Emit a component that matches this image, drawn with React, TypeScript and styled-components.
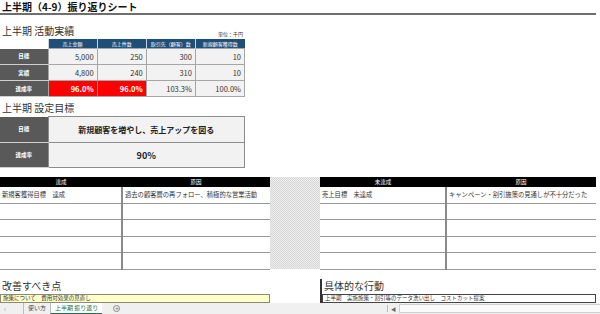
import React from "react";
import styled, { createGlobalStyle } from "styled-components";

const GlobalStyle = createGlobalStyle`
  html, body {
    margin: 0;
    padding: 0;
    background: #fff;
  }
  body {
    font-family: "Noto Sans CJK JP", "Noto Sans", sans-serif;
    color: #222;
    overflow: hidden;
  }
`;

const Page = styled.div`
  width: 600px;
  height: 314px;
  display: flex;
  flex-direction: column;
  overflow: hidden;
`;

const TitleBar = styled.h1`
  margin: 0;
  width: 594px;
  height: 12px;
  padding: 1px 0 0 2px;
  border-bottom: 2px solid #6e6e6e;
  font-size: 10px;
  font-weight: 700;
  line-height: 11px;
  color: #111;
`;

const SectionHead = styled.div<{ $top: number }>`
  width: 245px;
  margin-top: ${(p) => p.$top}px;
  height: 14px;
  display: flex;
  align-items: flex-end;
  justify-content: space-between;
`;

const SectionTitle = styled.h2`
  margin: 0;
  padding-left: 2px;
  font-size: 10px;
  font-weight: 400;
  line-height: 14px;
  color: #333;
`;

const Unit = styled.span`
  font-size: 5px;
  line-height: 9px;
  margin-right: 2px;
  color: #333;
`;

const Sheet = styled.table<{ $width: number }>`
  border-collapse: collapse;
  table-layout: fixed;
  width: ${(p) => p.$width}px;
  margin-top: 1px;
  th,
  td {
    padding: 0;
    overflow: hidden;
    white-space: nowrap;
  }
`;

const Row = styled.tr<{ $h: number }>`
  height: ${(p) => p.$h}px;
`;

const HeadCell = styled.th`
  background: #1f4e79;
  color: #fff;
  font-size: 5px;
  font-weight: 400;
  line-height: 9px;
  text-align: center;
  border-left: 1px solid #c8d2e0;
`;

const BlankCell = styled.th`
  background: #fff;
`;

const LabelCell = styled.th`
  background: #595959;
  color: #fff;
  font-size: 5.5px;
  font-weight: 700;
  text-align: center;
  border-bottom: 1px solid #d0d0d0;
`;

const ValueCell = styled.td<{ $alert?: boolean }>`
  background: ${(p) => (p.$alert ? "#ff0000" : "#f2f2f2")};
  color: ${(p) => (p.$alert ? "#fff" : "#333")};
  font-weight: ${(p) => (p.$alert ? 700 : 400)};
  font-size: 7.5px;
  text-align: right;
  padding-right: 3px !important;
  border: 1px solid #a6a6a6;
`;

const GoalCell = styled.td<{ $size: number }>`
  background: #f2f2f2;
  color: #222;
  font-size: ${(p) => p.$size}px;
  font-weight: 700;
  text-align: center;
  border: 1px solid #8c8c8c;
`;

const ReviewRow = styled.div`
  display: flex;
  margin-top: 9px;
  width: 596px;
`;

const ReviewTable = styled.table<{ $width: number }>`
  border-collapse: collapse;
  table-layout: fixed;
  width: ${(p) => p.$width}px;
  th,
  td {
    padding: 0;
    white-space: nowrap;
    overflow: hidden;
  }
`;

const BlackHead = styled.th`
  background: #000;
  color: #fff;
  font-size: 5.5px;
  font-weight: 400;
  text-align: center;
  line-height: 10px;
  height: 10px;
`;

const NoteCell = styled.td<{ $divider?: boolean }>`
  height: 15.5px;
  font-size: 6.3px;
  color: #333;
  padding-left: 2px !important;
  border-bottom: 1px solid #9a9a9a;
  border-right: ${(p) => (p.$divider ? "2px solid #8a8a8a" : "none")};
`;

const Hatch = styled.div`
  width: 50px;
  height: 92px;
  background-color: #e4e4e4;
  background-image: repeating-conic-gradient(#d8d8d8 0 25%, #ececec 0 50%);
  background-size: 2px 2px;
`;

const BottomRow = styled.div`
  display: flex;
  gap: 50px;
  margin-top: 9px;
  width: 596px;
`;

const NoteBlock = styled.div<{ $width: number; $rule?: boolean }>`
  width: ${(p) => p.$width}px;
  border-left: ${(p) => (p.$rule ? "2px solid #333" : "none")};
  box-sizing: border-box;
`;

const BlockTitle = styled.h3`
  margin: 0;
  padding-left: 2px;
  height: 15px;
  font-size: 10px;
  font-weight: 400;
  line-height: 14px;
  color: #333;
`;

const NoteBox = styled.div<{ $tint?: boolean }>`
  height: 7px;
  border: 1px solid ${(p) => (p.$tint ? "#8c8c6c" : "#444")};
  background: ${(p) => (p.$tint ? "#ffffcc" : "#fff")};
  font-size: 5.5px;
  line-height: 7px;
  padding-left: 2px;
  color: #333;
  white-space: nowrap;
  overflow: hidden;
`;

const TabBar = styled.div`
  margin-top: auto;
  height: 11px;
  background: #f0f0f0;
  display: flex;
  align-items: stretch;
  font-size: 6px;
  color: #444;
`;

const NavArrow = styled.span`
  width: 23px;
  padding-left: 4px;
  box-sizing: border-box;
  color: #999;
  font-size: 7px;
  line-height: 11px;
`;

const Tab = styled.span<{ $active?: boolean }>`
  padding: 0 4px;
  line-height: 10px;
  border-left: 1px solid #bdbdbd;
  background: ${(p) => (p.$active ? "#fff" : "transparent")};
  color: ${(p) => (p.$active ? "#217346" : "#444")};
  border-bottom: ${(p) => (p.$active ? "1px solid #217346" : "none")};
`;

const AddButton = styled.span`
  width: 7px;
  height: 7px;
  margin: 2px 0 0 11px;
  border: 1px solid #888;
  border-radius: 50%;
  box-sizing: border-box;
  color: #666;
  font-size: 6px;
  line-height: 5px;
  text-align: center;
`;

const ScrollArea = styled.div`
  margin-left: auto;
  width: 213px;
  display: flex;
  align-items: center;
  gap: 3px;
`;

const ScrollDivider = styled.span`
  width: 1px;
  height: 7px;
  background: #bbb;
`;

const ScrollArrow = styled.span`
  font-size: 5px;
  color: #666;
`;

const ScrollTrack = styled.span`
  flex: 1;
  height: 7px;
  border: 1px solid #d0d0d0;
  border-right: none;
  background: #fafafa;
`;

const headers = ["売上金額", "売上件数", "取引先（顧客）数", "新規顧客獲得数"];

const results = [
  { label: "目標", values: ["5,000", "250", "300", "10"], alert: [] as number[] },
  { label: "実績", values: ["4,800", "240", "310", "10"], alert: [] as number[] },
  { label: "達成率", values: ["96.0%", "96.0%", "103.3%", "100.0%"], alert: [0, 1] },
];

const achieved = [["新規客獲得目標　達成", "過去の顧客層の再フォロー、積極的な営業活動"], ["", ""], ["", ""], ["", ""], ["", ""]];
const missed = [["売上目標　未達成", "キャンペーン・割引施策の見通しが不十分だった"], ["", ""], ["", ""], ["", ""], ["", ""]];

function Review({ title, rows, width, split }: { title: string; rows: string[][]; width: number; split: number }) {
  return (
    <ReviewTable $width={width}>
      <colgroup>
        <col style={{ width: split }} />
        <col />
      </colgroup>
      <thead>
        <tr>
          <BlackHead>{title}</BlackHead>
          <BlackHead>原因</BlackHead>
        </tr>
      </thead>
      <tbody>
        {rows.map((r, i) => (
          <tr key={i}>
            <NoteCell $divider>{r[0]}</NoteCell>
            <NoteCell>{r[1]}</NoteCell>
          </tr>
        ))}
      </tbody>
    </ReviewTable>
  );
}

export default function App() {
  return (
    <Page>
      <GlobalStyle />
      <TitleBar>上半期（4-9）振り返りシート</TitleBar>

      <SectionHead $top={9}>
        <SectionTitle>上半期 活動実績</SectionTitle>
        <Unit>単位：千円</Unit>
      </SectionHead>
      <Sheet $width={245}>
        <colgroup>
          <col style={{ width: 48 }} />
          <col />
          <col />
          <col />
          <col />
        </colgroup>
        <thead>
          <Row $h={9}>
            <BlankCell />
            {headers.map((h) => (
              <HeadCell key={h}>{h}</HeadCell>
            ))}
          </Row>
        </thead>
        <tbody>
          {results.map((r) => (
            <Row $h={16} key={r.label}>
              <LabelCell>{r.label}</LabelCell>
              {r.values.map((v, i) => (
                <ValueCell key={i} $alert={r.alert.includes(i)}>
                  {v}
                </ValueCell>
              ))}
            </Row>
          ))}
        </tbody>
      </Sheet>

      <SectionHead $top={4}>
        <SectionTitle>上半期 設定目標</SectionTitle>
      </SectionHead>
      <Sheet $width={245}>
        <colgroup>
          <col style={{ width: 48 }} />
          <col />
        </colgroup>
        <tbody>
          <Row $h={26}>
            <LabelCell>目標</LabelCell>
            <GoalCell $size={8}>新規顧客を増やし、売上アップを図る</GoalCell>
          </Row>
          <Row $h={25}>
            <LabelCell>達成率</LabelCell>
            <GoalCell $size={9}>90%</GoalCell>
          </Row>
        </tbody>
      </Sheet>

      <ReviewRow>
        <Review title="達成" rows={achieved} width={270} split={122} />
        <Hatch />
        <Review title="未達成" rows={missed} width={276} split={126} />
      </ReviewRow>

      <BottomRow>
        <NoteBlock $width={270}>
          <BlockTitle>改善すべき点</BlockTitle>
          <NoteBox $tint>施策について　費用対効果の見直し</NoteBox>
        </NoteBlock>
        <NoteBlock $width={276} $rule>
          <BlockTitle>具体的な行動</BlockTitle>
          <NoteBox>上半期　実施施策・割引等のデータ洗い出し　コストカット提案</NoteBox>
        </NoteBlock>
      </BottomRow>

      <TabBar>
        <NavArrow>‹</NavArrow>
        <Tab>使い方</Tab>
        <Tab $active>上半期 振り返り</Tab>
        <AddButton>+</AddButton>
        <ScrollArea>
          <ScrollDivider />
          <ScrollArrow>◀</ScrollArrow>
          <ScrollTrack />
        </ScrollArea>
      </TabBar>
    </Page>
  );
}
